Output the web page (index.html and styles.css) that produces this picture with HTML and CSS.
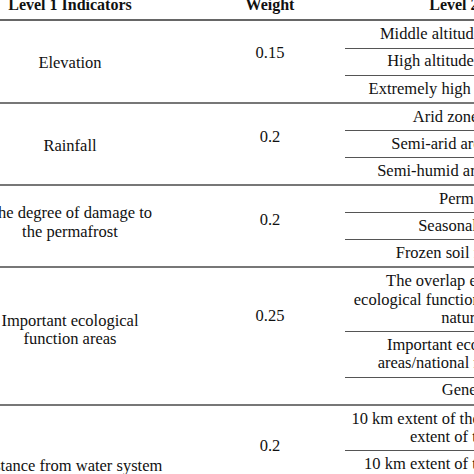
FILE: index.html
```html
<!DOCTYPE html>
<html lang="en">
<head>
<meta charset="utf-8">
<title>Indicators table</title>
<link rel="stylesheet" href="styles.css">
</head>
<body>
<table class="tbl">
  <colgroup><col class="c1"><col class="c2"><col class="c3"></colgroup>
  <thead>
    <tr><th>Level 1 Indicators</th><th>Weight</th><th>Level 2 Indicators</th></tr>
  </thead>
  <tbody>
    <tr>
      <td rowspan="3" class="l1 l1-one">Elevation</td>
      <td rowspan="3" class="w w-elev">0.15</td>
      <td class="l2">Middle altitude area (3000–4000)</td>
    </tr>
    <tr><td class="l2">High altitude area (4000–5000)</td></tr>
    <tr><td class="l2 end">Extremely high altitude area (&gt;5000)</td></tr>

    <tr>
      <td rowspan="3" class="l1 l1-one">Rainfall</td>
      <td rowspan="3" class="w w-rain">0.2</td>
      <td class="l2">Arid zone (&lt;200 mm/a)</td>
    </tr>
    <tr><td class="l2">Semi-arid area (200–400 mm)</td></tr>
    <tr><td class="l2 end">Semi-humid area (400–800 mm/a)</td></tr>

    <tr>
      <td rowspan="3" class="l1 l1-perm">The degree of damage to<br>the permafrost</td>
      <td rowspan="3" class="w w-perm">0.2</td>
      <td class="l2">Permafrost area</td>
    </tr>
    <tr><td class="l2">Seasonally frozen soil</td></tr>
    <tr><td class="l2 end">Frozen soil free area (others)</td></tr>

    <tr>
      <td rowspan="3" class="l1 l1-eco">Important ecological<br>function areas</td>
      <td rowspan="3" class="w w-eco">0.25</td>
      <td class="l2">The overlap extent of important<br>ecological function areas and the national<br>nature reserves</td>
    </tr>
    <tr><td class="l2">Important ecological functional<br>areas/national nature reserve areas</td></tr>
    <tr><td class="l2 end">General region</td></tr>

    <tr>
      <td rowspan="3" class="l1 l1-one">Distance from water system</td>
      <td rowspan="3" class="w w-water">0.2</td>
      <td class="l2">10 km extent of the main stream and 5 km<br>extent of the other rivers</td>
    </tr>
    <tr><td class="l2">10 km extent of the main stream and 5<br>km extent of the other rivers</td></tr>
    <tr><td class="l2 end">Other areas</td></tr>
  </tbody>
</table>
</body>
</html>
```
FILE: styles.css
```css
html, body {
  margin: 0;
  padding: 0;
  background: #ffffff;
}
body {
  width: 474px;
  height: 474px;
  overflow: hidden;
}
.tbl {
  border-collapse: separate;
  border-spacing: 0;
  table-layout: fixed;
  width: 692px;
  margin: -8.4px 0 0 -55px;
  font-family: "Liberation Serif", "Times New Roman", serif;
  font-size: 16.5px;
  line-height: 18.3px;
  color: #111111;
}
.c1 { width: 250px; }
.c2 { width: 150px; }
.c3 { width: 292px; }

th, td {
  padding: 3.92px 0;
  text-align: center;
  white-space: nowrap;
  vertical-align: middle;
}
th {
  font-size: 16px;
  font-weight: bold;
  padding-top: 4px;
  padding-bottom: 5.5px;
  border-bottom: 2px solid #666666;
}
.l2 { border-bottom: 1px solid #555555; }
.l2.end, .l1, .w { border-bottom: 2px solid #777777; }

.l1-one { padding-top: 6px; padding-bottom: 2px; }
.l1-perm { padding-top: 3px; padding-bottom: 10px; }
.l1-eco { padding-top: 2px; padding-bottom: 13.8px; }

.w { padding-top: 2px; }
.w-elev { padding-bottom: 19px; }
.w-rain { padding-bottom: 15.8px; }
.w-perm { padding-bottom: 14.6px; }
.w-eco { padding-bottom: 41.4px; }
.w-water { padding-bottom: 37.6px; }
```
